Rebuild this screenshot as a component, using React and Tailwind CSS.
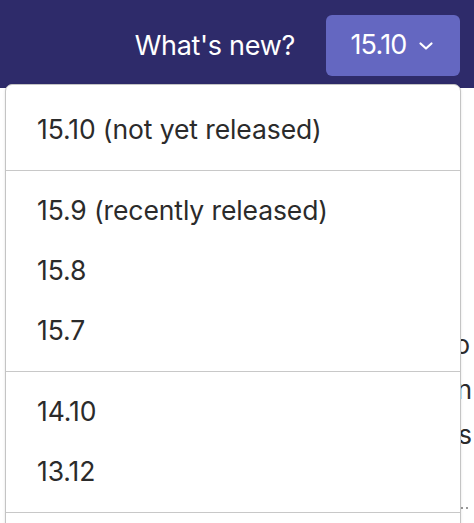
import React from "react";

const groups = [
  ["15.10 (not yet released)"],
  ["15.9 (recently released)", "15.8", "15.7"],
  ["14.10", "13.12"],
];

export default function App() {
  return (
    <div
      className="relative w-[474px] h-[523px] overflow-hidden bg-white"
      style={{ fontFamily: "Inter, 'Noto Sans', sans-serif" }}
    >
      <header className="h-[88px] bg-[#2e2b6a] flex justify-end items-start pt-[15px] pr-[14px]">
        <div className="flex items-center gap-[31px]">
          <span className="text-white text-[27px] leading-[61px] tracking-[-0.3px]">What's new?</span>
          <button className="w-[134px] h-[61px] rounded-md bg-[#6467c1] flex items-center justify-center gap-[11px] text-white text-[27px] tracking-[-0.8px] pr-[2px]">
            <span>15.10</span>
            <svg width="16" height="10" viewBox="0 0 16 10" fill="none" className="mt-[1px]">
              <path d="M2.5 2.5l5.5 5 5.5-5" stroke="white" strokeWidth="2.2" strokeLinecap="round" strokeLinejoin="round" />
            </svg>
          </button>
        </div>
      </header>

      <main className="flex flex-col items-end pt-[234px] pr-[2px] text-[26px] leading-[45px] text-[#2b2b2b]">
        <div className="mr-[2px]">to</div>
        <div>in</div>
        <div>is</div>
        <div className="mt-[50px] mr-[4px] flex gap-[3px]">
          <div className="w-[2px] h-[2px] bg-[#999]" />
          <div className="w-[2px] h-[2px] bg-[#999]" />
        </div>
      </main>

      <div className="absolute left-[5px] top-[84px] w-[456px] bg-white border border-[#c4c4c4] rounded-t-[7px] text-[26.5px] tracking-[-0.1px] text-[#2b2b2b] shadow-sm">
        {groups.map((g, gi) => (
          <div
            key={gi}
            className={
              gi === 0
                ? "pt-[15px] pb-[10px] border-b border-[#c8c8c8]"
                : "py-[10px] border-b border-[#c8c8c8]"
            }
          >
            {g.map((item) => (
              <div key={item} className="h-[60px] flex items-center pl-[31px]">
                {item}
              </div>
            ))}
          </div>
        ))}
        <div className="h-[60px]" />
      </div>
    </div>
  );
}
